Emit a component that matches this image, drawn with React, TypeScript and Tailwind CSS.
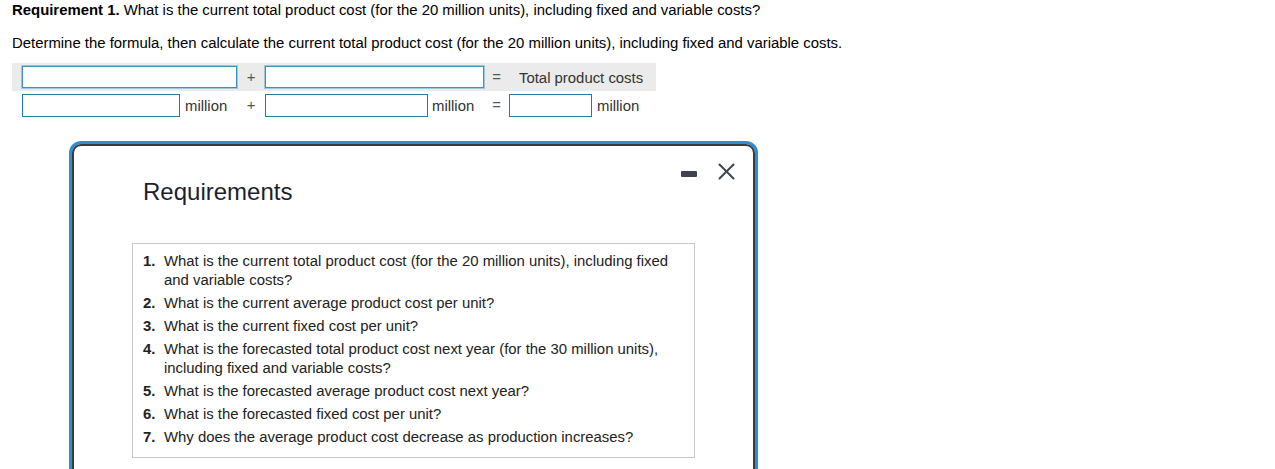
import React from "react";

const items: { n: string; t: string }[] = [
  { n: "1.", t: "What is the current total product cost (for the 20 million units), including fixed and variable costs?" },
  { n: "2.", t: "What is the current average product cost per unit?" },
  { n: "3.", t: "What is the current fixed cost per unit?" },
  { n: "4.", t: "What is the forecasted total product cost next year (for the 30 million units), including fixed and variable costs?" },
  { n: "5.", t: "What is the forecasted average product cost next year?" },
  { n: "6.", t: "What is the forecasted fixed cost per unit?" },
  { n: "7.", t: "Why does the average product cost decrease as production increases?" },
];

function Input1({ w }: { w: string }) {
  return (
    <div
      className={`${w} h-[22px] bg-white border border-[#3d93b3] shadow-[0_0_0_1px_#9cc9d9]`}
    />
  );
}

function Input2({ w }: { w: string }) {
  return <div className={`${w} h-[23px] bg-white border border-[#1f7fa3]`} />;
}

export default function App() {
  return (
    <div
      className="w-[1275px] h-[469px] overflow-hidden bg-white text-black"
      style={{ fontFamily: '"Liberation Sans", Arial, sans-serif' }}
    >
      <div className="pl-[12px] pt-[2px] text-[14.9px] leading-[17px]">
        <p>
          <span className="font-bold">Requirement 1.</span> What is the current total product cost (for the 20 million units), including fixed and variable costs?
        </p>
        <p className="mt-[16px]">
          Determine the formula, then calculate the current total product cost (for the 20 million units), including fixed and variable costs.
        </p>
      </div>

      {/* formula rows */}
      <div className="ml-[12px] mt-[11px] text-[14.9px] leading-[17px] text-[#333]">
        <div className="flex items-center w-[644px] h-[28px] bg-[#ebebeb] pl-[10px]">
          <Input1 w="w-[215px]" />
          <div className="w-[28px] text-center text-[#555]">+</div>
          <Input1 w="w-[219px]" />
          <div className="w-[25px] text-center text-[#555]">=</div>
          <div className="pl-[10px] pt-[2px] text-[#333]">Total product costs</div>
        </div>
        <div className="flex items-center h-[23px] mt-[3px] pl-[10px]">
          <Input2 w="w-[158px]" />
          <div className="w-[57px] pl-[5px] pt-[2px]">million</div>
          <div className="w-[28px] text-center text-[#555]">+</div>
          <Input2 w="w-[163px]" />
          <div className="w-[56px] pl-[4px] pt-[2px]">million</div>
          <div className="w-[25px] text-center text-[#555]">=</div>
          <Input2 w="w-[83px]" />
          <div className="pl-[5px] pt-[2px]">million</div>
        </div>
      </div>

      {/* modal */}
      <div className="ml-[69px] mt-[24px] w-[689px] h-[380px] rounded-[12px] border-[3px] border-[#2a8fd6]">
        <div className="w-full h-full rounded-[9px] border-2 border-[#3b3b3b] bg-white">
          <div className="flex justify-between">
            <div className="pl-[69px] pt-[32px] text-[24px] leading-[28px] text-[#1b1f30]">
              Requirements
            </div>
            <div className="flex items-start pt-[17px] pr-[18px]">
              <div className="mt-[8px] w-[16px] h-[6px] rounded-[1px] bg-[#3d4450]" />
              <svg
                className="ml-[21px]"
                width="17"
                height="17"
                viewBox="0 0 17 17"
                fill="none"
                stroke="#3d4450"
                strokeWidth="2"
                strokeLinecap="round"
              >
                <line x1="1.5" y1="1.5" x2="15.5" y2="15.5" />
                <line x1="15.5" y1="1.5" x2="1.5" y2="15.5" />
              </svg>
            </div>
          </div>

          <div className="ml-[58px] mt-[37px] w-[563px] border border-[#c8c8c8] pl-[10px] pr-[12px] pt-[8px] pb-[6px] text-[14.9px] leading-[19px] text-[#222]">
            {items.map((it) => (
              <div key={it.n} className="flex mb-[4px]">
                <div className="w-[21px] shrink-0 font-bold">{it.n}</div>
                <div>{it.t}</div>
              </div>
            ))}
          </div>
        </div>
      </div>
    </div>
  );
}
